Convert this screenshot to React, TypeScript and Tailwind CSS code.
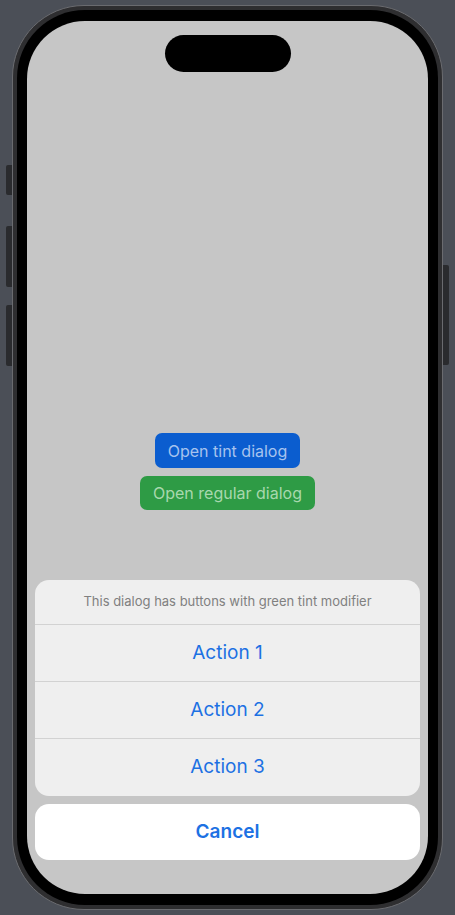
import React from "react";

const actions = ["Action 1", "Action 2", "Action 3"];

export default function App() {
  return (
    <main
      className="relative h-[915px] w-[455px] overflow-hidden bg-[#4b4f57] pt-[5px] pl-[12px]"
      style={{ fontFamily: "Inter, 'Noto Sans', sans-serif" }}
    >
      {/* hardware buttons */}
      <div className="absolute left-[6px] top-[165px] h-[30px] w-[6px] rounded-l-[2px] bg-[#2a2b2e]" />
      <div className="absolute left-[6px] top-[226px] h-[61px] w-[6px] rounded-l-[2px] bg-[#2a2b2e]" />
      <div className="absolute left-[6px] top-[305px] h-[61px] w-[6px] rounded-l-[2px] bg-[#2a2b2e]" />
      <div className="absolute left-[443px] top-[265px] h-[100px] w-[6px] rounded-r-[2px] bg-[#2a2b2e]" />

      {/* phone frame */}
      <div className="h-[905px] w-[431px] rounded-[72px] border border-[#6a6b6f] bg-[#2e2e30] p-[4px]">
        <div className="h-full w-full rounded-[68px] bg-black pt-[11px] pb-[11px] px-[10px]">
          <section className="relative flex h-[873px] w-[401px] flex-col items-center overflow-hidden rounded-[58px] bg-[#c6c6c6]">
            {/* dynamic island */}
            <div className="absolute left-[138px] top-[14px] h-[37px] w-[126px] rounded-full bg-black" />

            <div className="flex flex-col items-center gap-[8px] pt-[412px]">
              <button className="h-[35px] rounded-[7px] bg-[#0b5dcf] px-[13px] text-[16px] text-[#a7c3ee]">
                Open tint dialog
              </button>
              <button className="h-[34px] rounded-[7px] bg-[#2e9b45] px-[13px] text-[16px] text-[#a8d8ae]">
                Open regular dialog
              </button>
            </div>

            <div className="flex-1" />

            <div className="flex w-full flex-col gap-[8px] px-[8px] pb-[34px]">
              <div className="overflow-hidden rounded-[14px] bg-[#efefef]">
                <div className="flex h-[44px] items-center justify-center text-[13px] text-[#808080]">
                  This dialog has buttons with green tint modifier
                </div>
                {actions.map((a, i) => (
                  <div
                    key={a}
                    className={`flex items-center justify-center border-t border-[#d2d2d2] text-[19px] text-[#1d71e3] ${
                      i === 2 ? "h-[58px]" : "h-[57px]"
                    }`}
                  >
                    {a}
                  </div>
                ))}
              </div>
              <div className="flex h-[56px] items-center justify-center rounded-[14px] bg-white text-[19px] font-semibold text-[#1d71e3]">
                Cancel
              </div>
            </div>
          </section>
        </div>
      </div>
    </main>
  );
}
